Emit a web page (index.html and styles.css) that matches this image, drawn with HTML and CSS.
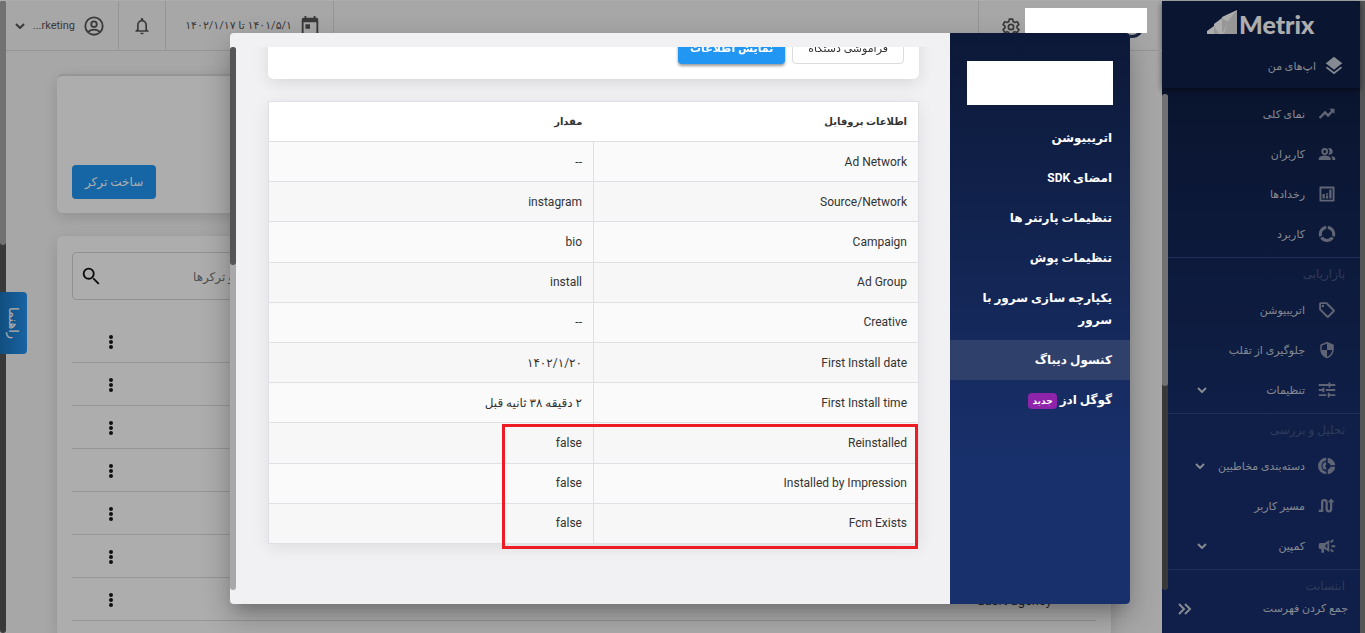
FILE: index.html
```html
<!DOCTYPE html>
<html lang="fa" dir="rtl">
<head>
    <meta charset="UTF-8">
    <meta name="viewport" content="width=device-width, initial-scale=1.0">
    <title>Metrix</title>
    <link rel="stylesheet" href="styles.css">
</head>
<body>
    <div class="page">
        <aside class="sidebar">
            <div class="sidebar-top">
                <a href="#" class="logo" dir="ltr">
                    <svg width="31" height="24" viewBox="0 0 31 24">
                        <path fill="#fff" d="M0 24v-3l7-5v-2l8-6V7L30 0v24z"/>
                        <path fill="#c9c9c9" d="M7 16l5 8H7zM15 8l6 4-6 12zM30 0v24H17l4-13z" opacity=".6"/>
                    </svg>
                    <span>Metrix</span>
                </a>
                <a href="#" class="apps-link">
                    <svg class="icon-22" viewBox="0 0 24 24"><path d="M12 18.5l-7.4-5.7L3 14l9 7 9-7-1.600-1.300zM12 16l9-7-9-7-9 7z"/></svg>
                    <span>اپ‌های من</span>
                </a>
            </div>
            <div class="sidebar-body">
                <nav class="side-nav">
                    <div class="side-group">
                        <a href="#"><svg viewBox="0 0 24 24"><path d="M15 5l2.600 2.600-4.200 4.200-4-4L1 16.200 3.200 18.400l6.200-6.200 4 4 6.400-6.400L22 12V5z"/></svg><span>نمای کلی</span></a>
                        <a href="#"><svg viewBox="0 0 24 24"><path d="M9 4a4.500 4.500 0 100 9 4.500 4.500 0 000-9zm0 2.500a2 2 0 110 4 2 2 0 010-4zm6-2.500c-.6 0-1 .1-1.400.3a6 6 0 010 8.400A4.500 4.500 0 1015 4zM9 14c-3 0-8 1.500-8 4v2h16v-2c0-2.500-5-4-8-4zm8 .2c1.300.9 2 2.100 2 3.800v2h4v-2c0-2-3-3.300-6-3.800z"/></svg><span>کاربران</span></a>
                        <a href="#"><svg viewBox="0 0 24 24"><path d="M3 2h18a1 1 0 011 1v18a1 1 0 01-1 1H3a1 1 0 01-1-1V3a1 1 0 011-1zm1.500 2.500v15h15v-15zM6 12h3v6H6zm4.500 2h3v4h-3zm0-3h3v2h-3zM15 6h3v12h-3z" fill-rule="evenodd"/></svg><span>رخدادها</span></a>
                        <a href="#"><svg viewBox="0 0 24 24"><path d="M13 1v4.200a7 7 0 015.600 8.800l3.600 2A11 11 0 0013 1zm-2 0a11 11 0 00-9.200 15l3.600-2A7 7 0 0111 5.200zM6.400 15.800l-3.600 2a11 11 0 0018.400 0l-3.600-2a7 7 0 01-11.200 0z"/></svg><span>کاربرد</span></a>
                    </div>
                    <div class="side-group">
                        <h3>بازاریابی</h3>
                        <a href="#"><svg viewBox="0 0 24 24"><path d="M22 11.600l-9.600-9.500A2 2 0 0011 1.500H3.500a2 2 0 00-2 2V11c0 .6.200 1 .6 1.400L11.600 22c.8.800 2 .8 2.800 0l7.600-7.600c.8-.8.8-2 0-2.800zM13 19.600L4 10.600V4h6.600l9 9zM6.500 5a1.700 1.700 0 110 3.400 1.700 1.700 0 010-3.400z" fill-rule="evenodd"/></svg><span>اتریبیوشن</span></a>
                        <a href="#"><svg viewBox="0 0 24 24"><path d="M12 1L3 5v6c0 5.500 3.800 10.700 9 12 5.200-1.300 9-6.500 9-12V5zm0 11h7c-.5 4.100-3.300 7.800-7 8.900V12H5V6.300l7-3.100z" fill-rule="evenodd"/></svg><span>جلوگیری از تقلب</span></a>
                        <a href="#"><svg viewBox="0 0 24 24"><path d="M1 4h13V2h2.500v2H23v2.500h-6.500v2H14v-2H1zm0 6.700h5V9h2.500v6H6v-1.800H1zm9.500 0H23v2.500H10.500zM1 17.500h10V20H1zM13 15.500h2.500v2H23V20h-7.500v2H13z"/></svg><span>تنظیمات</span><svg class="chev" viewBox="0 0 10 6"><path d="M1 1l4 4 4-4"/></svg></a>
                    </div>
                    <div class="side-group">
                        <h3>تحلیل و بررسی</h3>
                        <a href="#"><svg viewBox="0 0 24 24"><path d="M11 1a11 11 0 000 22v-3.500a7.600 7.600 0 010-15zM13 1v6.500a4 4 0 013.500 3.500H23A11 11 0 0013 1zm3.500 12a4 4 0 01-3.500 3.500V23a11 11 0 0010-10zM11 7a5 5 0 000 10v-3.200a1.900 1.900 0 010-3.600z"/></svg><span>دسته‌بندی مخاطبین</span><svg class="chev" viewBox="0 0 10 6"><path d="M1 1l4 4 4-4"/></svg></a>
                        <a href="#"><svg viewBox="0 0 24 24"><path d="M1 20V17h3V7a4.500 4.500 0 019 0v9a1.500 1.500 0 003 0V7h-3l4.500-5L22 7h-3v9a4.500 4.500 0 01-9 0V7a1.500 1.500 0 00-3 0v13z"/></svg><span>مسیر کاربر</span></a>
                        <a href="#"><svg viewBox="0 0 24 24"><path d="M18 11v2.500h5V11zM16 17.600l3.600 3 1.500-1.900-3.600-2.900zM21.100 5l-1.500-1.900-3.600 3 1.500 1.900zM3 8a2 2 0 00-2 2v4c0 1.100.9 2 2 2h1.500v5H8v-5h1l6 4V4L9 8zm7 2.500l2.500-1.500v6L10 13.500z" fill-rule="evenodd"/></svg><span>کمپین</span><svg class="chev" viewBox="0 0 10 6"><path d="M1 1l4 4 4-4"/></svg></a>
                    </div>
                    <div class="side-group">
                        <h3>اینسایت</h3>
                    </div>
                </nav>
                <div class="scrollbar side-scroll"><i></i></div>
            </div>
            <button type="button" class="collapse">
                <span>جمع کردن فهرست</span>
                <svg width="14" height="12" viewBox="0 0 14 12"><path d="M1 1l5 5-5 5M7 1l5 5-5 5"/></svg>
            </button>
        </aside>

        <div class="main">
            <header class="topbar">
                <div class="top-app">
                    <span class="app-circle"></span>
                    <button type="button" class="icon-btn" aria-label="تنظیمات">
                        <svg class="icon-20" viewBox="0 0 24 24"><path fill="none" stroke="#555" stroke-width="2" stroke-linejoin="round" d="M10 2.500h4l.6 3 2 1.100 2.900-1 2 3.500-2.300 2v2l2.300 2-2 3.500-2.900-1-2 1.100-.6 3h-4l-.6-3-2-1.100-2.900 1-2-3.500 2.300-2v-2l-2.300-2 2-3.500 2.900 1 2-1.100z"/><circle cx="12" cy="12" r="3.200" fill="none" stroke="#555" stroke-width="2"/></svg>
                    </button>
                </div>
                <div class="top-space"></div>
                <button type="button" class="top-date">
                    <svg class="icon-22" viewBox="0 0 24 24"><path d="M19 3h-1V1h-2v2H8V1H6v2H5a2 2 0 00-2 2v15c0 1.100.9 2 2 2h14a2 2 0 002-2V5a2 2 0 00-2-2zm0 17H5V8h14zM7 10h5v5H7z" fill-rule="evenodd"/></svg>
                    <span>۱۴۰۱/۵/۱ تا ۱۴۰۲/۱/۱۷</span>
                </button>
                <button type="button" class="top-bell" aria-label="اعلان‌ها">
                    <svg class="icon-20" viewBox="0 0 24 24"><path d="M12 22c1.100 0 2-.9 2-2h-4c0 1.100.9 2 2 2zm6-6v-5c0-3.100-1.600-5.600-4.500-6.300V4a1.500 1.500 0 00-3 0v.7C7.600 5.400 6 7.900 6 11v5l-2 2v1h16v-1zm-2 1H8v-6c0-2.500 1.500-4.500 4-4.500s4 2 4 4.500z" fill-rule="evenodd"/></svg>
                </button>
                <button type="button" class="top-user">
                    <svg class="icon-22" viewBox="0 0 24 24"><path fill="none" stroke="#555" stroke-width="2" d="M5.500 19c3-4 10-4 13 0M12 2.500a9.500 9.500 0 100 19 9.500 9.500 0 000-19zM12 7a3 3 0 100 6 3 3 0 000-6z"/></svg>
                    <span dir="ltr">...rketing</span>
                    <svg class="chev" viewBox="0 0 10 6"><path d="M1 1l4 4 4-4"/></svg>
                </button>
            </header>

            <section class="card create-card">
                <button type="button" class="btn-primary">ساخت ترکر</button>
            </section>

            <section class="card list-card">
                <div class="search">
                    <input type="search" aria-label="جستجو" placeholder="و ترکرها">
                    <svg class="icon-22" viewBox="0 0 24 24"><path fill="none" stroke="#111" stroke-width="2" d="M14.500 14.500L20.500 20.500M9.500 4a5.500 5.500 0 100 11 5.500 5.500 0 000-11z"/></svg>
                </div>
                <ul class="trackers">
                    <li><button type="button" aria-label="بیشتر"><i></i><i></i><i></i></button></li>
                    <li><button type="button" aria-label="بیشتر"><i></i><i></i><i></i></button></li>
                    <li><button type="button" aria-label="بیشتر"><i></i><i></i><i></i></button></li>
                    <li><button type="button" aria-label="بیشتر"><i></i><i></i><i></i></button></li>
                    <li><button type="button" aria-label="بیشتر"><i></i><i></i><i></i></button></li>
                    <li><button type="button" aria-label="بیشتر"><i></i><i></i><i></i></button></li>
                    <li>
                        <span class="tracker-name"><svg class="chev" viewBox="0 0 10 6"><path d="M1 1l4 4 4-4"/></svg><span dir="ltr">adsrt agency</span></span>
                        <button type="button" aria-label="بیشتر"><i></i><i></i><i></i></button>
                    </li>
                </ul>
            </section>
        </div>
        <div class="scrollbar page-scroll"><i></i></div>
        <button type="button" class="help-tab">راهنما</button>
    </div>

    <div class="overlay">
        <div class="modal" role="dialog" aria-label="کنسول دیباگ">
            <nav class="modal-menu">
                <div class="app-box"></div>
                <a href="#">اتریبیوشن</a>
                <a href="#">امضای SDK</a>
                <a href="#">تنظیمات پارتنر ها</a>
                <a href="#">تنظیمات پوش</a>
                <a href="#">یکپارچه سازی سرور با سرور</a>
                <a href="#" class="active">کنسول دیباگ</a>
                <a href="#">گوگل ادز <span class="badge">جدید</span></a>
            </nav>
            <div class="modal-content">
                <div class="device-card">
                    <button type="button" class="btn-outline">فراموشی دستگاه</button>
                    <button type="button" class="btn-primary raised">نمایش اطلاعات</button>
                </div>
                <div class="profile">
                    <table>
                        <thead>
                            <tr><th>اطلاعات پروفایل</th><th>مقدار</th></tr>
                        </thead>
                        <tbody>
                            <tr><td>Ad Network</td><td>--</td></tr>
                            <tr><td>Source/Network</td><td>instagram</td></tr>
                            <tr><td>Campaign</td><td>bio</td></tr>
                            <tr><td>Ad Group</td><td>install</td></tr>
                            <tr><td>Creative</td><td>--</td></tr>
                            <tr><td>First Install date</td><td>۱۴۰۲/۱/۲۰</td></tr>
                            <tr><td>First Install time</td><td>۲ دقیقه ۳۸ ثانیه قبل</td></tr>
                            <tr><td>Reinstalled</td><td>false</td></tr>
                            <tr><td>Installed by Impression</td><td>false</td></tr>
                            <tr><td>Fcm Exists</td><td>false</td></tr>
                        </tbody>
                    </table>
                    <div class="highlight"></div>
                </div>
            </div>
            <div class="scrollbar modal-scroll"><i></i></div>
        </div>
    </div>
    <div class="name-cover"></div>
</body>
</html>
```
FILE: styles.css
```css
* {
    margin: 0;
    padding: 0;
    box-sizing: border-box;
}

body {
    font-family: Roboto, "DejaVu Sans", sans-serif;
    font-size: 12px;
    color: #333;
    background: #f7f7f7;
    overflow: hidden;
}

a {
    color: inherit;
    text-decoration: none;
}

button {
    font: inherit;
    color: inherit;
    background: none;
    border: none;
    cursor: pointer;
}

svg {
    fill: currentColor;
    flex: none;
}

.icon-20 {
    width: 20px;
    height: 20px;
}

.icon-22 {
    width: 22px;
    height: 22px;
}

.chev {
    width: 10px;
    height: 6px;
}

.chev path,
.collapse path {
    fill: none;
    stroke: currentColor;
    stroke-width: 2;
}

.page {
    display: flex;
    height: 100vh;
    border-top: 1px solid #fff;
}

/* Scrollbars */
.scrollbar {
    width: 6px;
    flex: none;
    background: #555;
    border-radius: 3px;
}

.scrollbar i {
    display: block;
    background: #a9a9a9;
    border-radius: 3px;
}

.page-scroll i {
    height: 244px;
}

/* Sidebar */
.sidebar {
    width: 203px;
    flex: none;
    display: flex;
    flex-direction: column;
    font-size: 11px;
    color: #c5cad6;
    background: linear-gradient(#0d1b3c, #182f6c 70%);
    border-right: 5px solid #7e7e7e;
}

.sidebar-top {
    height: 87px;
    flex: none;
    padding: 9px 15px 0;
    background: #0f2149;
    box-shadow: 0 2px 6px rgba(0, 0, 0, 0.5);
}

.logo {
    display: flex;
    align-items: baseline;
    gap: 1px;
    height: 28px;
    padding-left: 30px;
    color: #fff;
    font: 900 25px/24px Lato, sans-serif;
}

.apps-link {
    display: flex;
    align-items: center;
    gap: 7px;
    height: 40px;
    margin-top: 8px;
}

.sidebar-body {
    flex: 1;
    min-height: 0;
    display: flex;
    padding-top: 6px;
}

.side-nav {
    flex: 1;
    min-width: 0;
    overflow: hidden;
}

.side-group {
    padding-bottom: 3px;
}

.side-group + .side-group {
    border-top: 1px solid #304680;
}

.side-group h3 {
    height: 32px;
    line-height: 32px;
    padding-right: 15px;
    font-size: 12px;
    font-weight: 400;
    color: #465785;
}

.side-group a {
    display: flex;
    align-items: center;
    height: 40px;
    padding: 0 24px 0 29px;
    gap: 13px;
    white-space: nowrap;
}

.side-group a svg {
    width: 18px;
    height: 18px;
    color: #8d95ab;
}

.side-group a .chev {
    width: 10px;
    height: 6px;
    margin-right: auto;
    color: #c5cad6;
}

.side-scroll i {
    height: 292px;
}

.collapse {
    display: flex;
    align-items: center;
    justify-content: space-between;
    height: 43px;
    flex: none;
    padding: 0 12px 6px 16px;
}

/* Main */
.main {
    flex: 1;
    min-width: 0;
    overflow: hidden;
}

.topbar {
    display: flex;
    height: 50px;
    border-bottom: 1px solid #dcdcdc;
    color: #555;
}

.topbar > * {
    display: flex;
    align-items: center;
    border-left: 1px solid #dcdcdc;
}

.top-app {
    width: 184px;
    padding-right: 18px;
}

.app-circle {
    width: 24px;
    height: 24px;
    border: 3px solid #24365f;
    border-radius: 50%;
}

.icon-btn {
    height: 20px;
    margin: 2px 99px 0 0;
}

.top-space {
    flex: 1;
}

.topbar .top-date {
    width: 168px;
    gap: 7px;
    padding-right: 12px;
    font-size: 11px;
}

.top-bell {
    width: 47px;
    justify-content: center;
}

.topbar .top-user {
    width: 112px;
    gap: 8px;
    padding-right: 13px;
    border-left: none;
    font-size: 11px;
}

.card {
    margin: 0 51px 23px;
    background: #fff;
    border-radius: 6px;
    box-shadow: 0 4px 16px rgba(0, 0, 0, 0.14);
}

.create-card {
    display: flex;
    align-items: flex-end;
    justify-content: flex-end;
    height: 139px;
    margin-top: 23px;
    padding: 0 15px 14px;
    border-top: 2px solid #dcdcdc;
}

.btn-primary {
    height: 34px;
    padding: 0 13px;
    border-radius: 4px;
    background: #2196f3;
    color: #fff;
}

.list-card {
    padding: 16px 15px;
}

.search {
    display: flex;
    align-items: center;
    height: 48px;
    padding: 0 7px;
    border: 1px solid #d5d5d5;
    border-radius: 4px;
}

.search input {
    flex: 1;
    min-width: 0;
    height: 40px;
    padding: 2px 0 0 79px;
    border: none;
    outline: none;
    background: none;
    font: inherit;
    text-align: left;
}

.search input::placeholder {
    color: #777;
}

.trackers {
    list-style: none;
    padding-top: 20px;
}

.trackers li {
    display: flex;
    align-items: center;
    height: 43px;
    border-bottom: 1px solid #dcdcdc;
}

.trackers button {
    display: flex;
    flex-direction: column;
    align-items: center;
    gap: 1px;
    width: 78px;
    padding-top: 1px;
    margin-right: auto;
}

.trackers i {
    width: 4px;
    height: 4px;
    border-radius: 50%;
    background: #181818;
}

.tracker-name {
    display: flex;
    align-items: center;
    gap: 14px;
    padding: 3px 20px 0 0;
    font-size: 13px;
}

.help-tab {
    position: fixed;
    left: 0;
    top: 292px;
    width: 27px;
    height: 62px;
    border-radius: 0 4px 4px 0;
    background: linear-gradient(90deg, #1a74bd, #2492f0);
    color: #fff;
    font-size: 13px;
    writing-mode: vertical-rl;
}

/* Modal */
.overlay {
    position: fixed;
    inset: 0;
    display: flex;
    justify-content: center;
    align-items: flex-start;
    padding: 33px 5px 29px 0;
    background: rgba(0, 0, 0, 0.32);
}

.modal {
    display: flex;
    width: 900px;
    height: 100%;
    background: #f1f1f3;
    border-radius: 4px;
    overflow: hidden;
    box-shadow: 0 11px 15px -7px rgba(0, 0, 0, 0.2), 0 12px 30px 3px rgba(0, 0, 0, 0.24);
}

.modal-menu {
    width: 180px;
    flex: none;
    background: linear-gradient(#0c1837, #18306b 75%);
    color: #fff;
    font-size: 12px;
    font-weight: 700;
}

.app-box {
    height: 44px;
    margin: 28px 17px 13px;
    background: #fff;
}

.modal-menu a {
    display: block;
    padding: 9px 18px;
    line-height: 22px;
}

.modal-menu a.active {
    background: #2f406b;
}

.badge {
    display: inline-block;
    padding: 0 4px;
    border-radius: 4px;
    background: #8e24aa;
    font-size: 9px;
    line-height: 16px;
}

.modal-content {
    flex: 1;
    min-width: 0;
    margin: 14px 0;
    padding: 0 31px 0 32px;
    overflow: hidden;
}

.modal-scroll {
    margin: 14px 0;
    background: #a8a8a8;
}

.modal-scroll i {
    height: 218px;
    background: #555;
}

/* the card is scrolled halfway out of the pane */
.device-card {
    display: flex;
    gap: 7px;
    margin-top: -33px;
    padding: 16px 15px 15px;
    background: #fff;
    border-radius: 6px;
    box-shadow: 0 4px 16px rgba(0, 0, 0, 0.1);
}

.device-card button {
    padding: 3px 15px 0;
    font-size: 11px;
}

.btn-outline {
    height: 34px;
    border: 1px solid #dcdcdc;
    border-radius: 4px;
}

.device-card .raised {
    padding: 3px 12px 0;
    box-shadow: 0 2px 3px rgba(0, 0, 0, 0.4);
    font-weight: 700;
}

.profile {
    position: relative;
    margin-top: 22px;
    box-shadow: 0 4px 16px rgba(0, 0, 0, 0.08);
}

table {
    width: 100%;
    height: 443px;
    table-layout: fixed;
    border-collapse: collapse;
    border: 1px solid #dee0e6;
    background: #fff;
}

th,
td {
    height: 40px;
    padding: 0 11px;
    text-align: right;
    border-bottom: 1px solid #dee0e6;
}

th {
    font-size: 10px;
}

td + td {
    border-right: 1px solid #dee0e6;
}

tbody tr {
    background: #f7f7f7;
}

tbody tr:nth-child(odd) {
    background: #fafafa;
}

.highlight {
    position: absolute;
    left: 234px;
    right: 1px;
    bottom: -5px;
    height: 125px;
    border: 3px solid #ed1c24;
}

.name-cover {
    position: fixed;
    top: 8px;
    right: 218px;
    width: 122px;
    height: 25px;
    background: #fff;
}
```
